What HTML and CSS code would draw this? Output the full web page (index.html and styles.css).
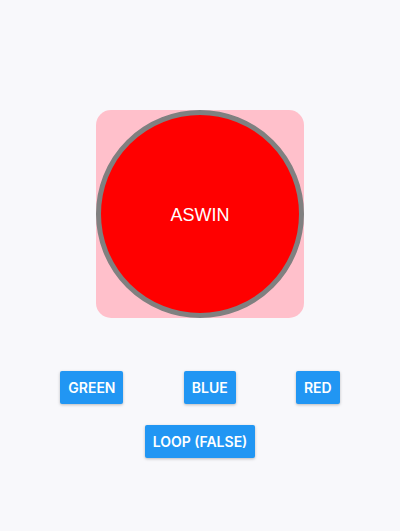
FILE: index.html
```html
<!DOCTYPE html>
<html>
<head>
<meta charset="utf-8">
<link rel="stylesheet" href="styles.css">
</head>
<body>
<main class="screen">
  <div class="box">
    <div class="circle"><span class="name">ASWIN</span></div>
  </div>
  <div class="row">
    <button class="btn">GREEN</button>
    <button class="btn">BLUE</button>
    <button class="btn">RED</button>
  </div>
  <div class="row-center">
    <button class="btn">LOOP (FALSE)</button>
  </div>
</main>
</body>
</html>
```
FILE: styles.css
```css
html, body {
  margin: 0;
  padding: 0;
  background: #f8f8fb;
}
.screen {
  width: 400px;
  height: 531px;
  padding-top: 110px;
  box-sizing: border-box;
  display: flex;
  flex-direction: column;
  align-items: stretch;
}
.box {
  width: 208px;
  height: 208px;
  margin: 0 auto;
  background: #ffc0cb;
  border-radius: 15px;
}
.circle {
  width: 208px;
  height: 208px;
  box-sizing: border-box;
  border: 5px solid #808080;
  border-radius: 50%;
  background: #ff0000;
  display: flex;
  align-items: center;
  justify-content: center;
}
.name {
  font-family: "Liberation Sans", Arial, sans-serif;
  font-size: 18px;
  color: #ffffff;
  margin-top: 2px;
}
.row {
  display: flex;
  justify-content: space-evenly;
  margin-top: 53px;
}
.row-center {
  display: flex;
  justify-content: center;
  margin-top: 21px;
}
.btn {
  font-family: Inter, "Noto Sans", sans-serif;
  font-weight: 600;
  font-size: 14px;
  color: #ffffff;
  background: #2196f3;
  border: none;
  border-radius: 2px;
  height: 33px;
  padding: 0 8px;
  box-shadow: 0 1px 3px rgba(0,0,0,0.25);
  letter-spacing: 0;
}
```
